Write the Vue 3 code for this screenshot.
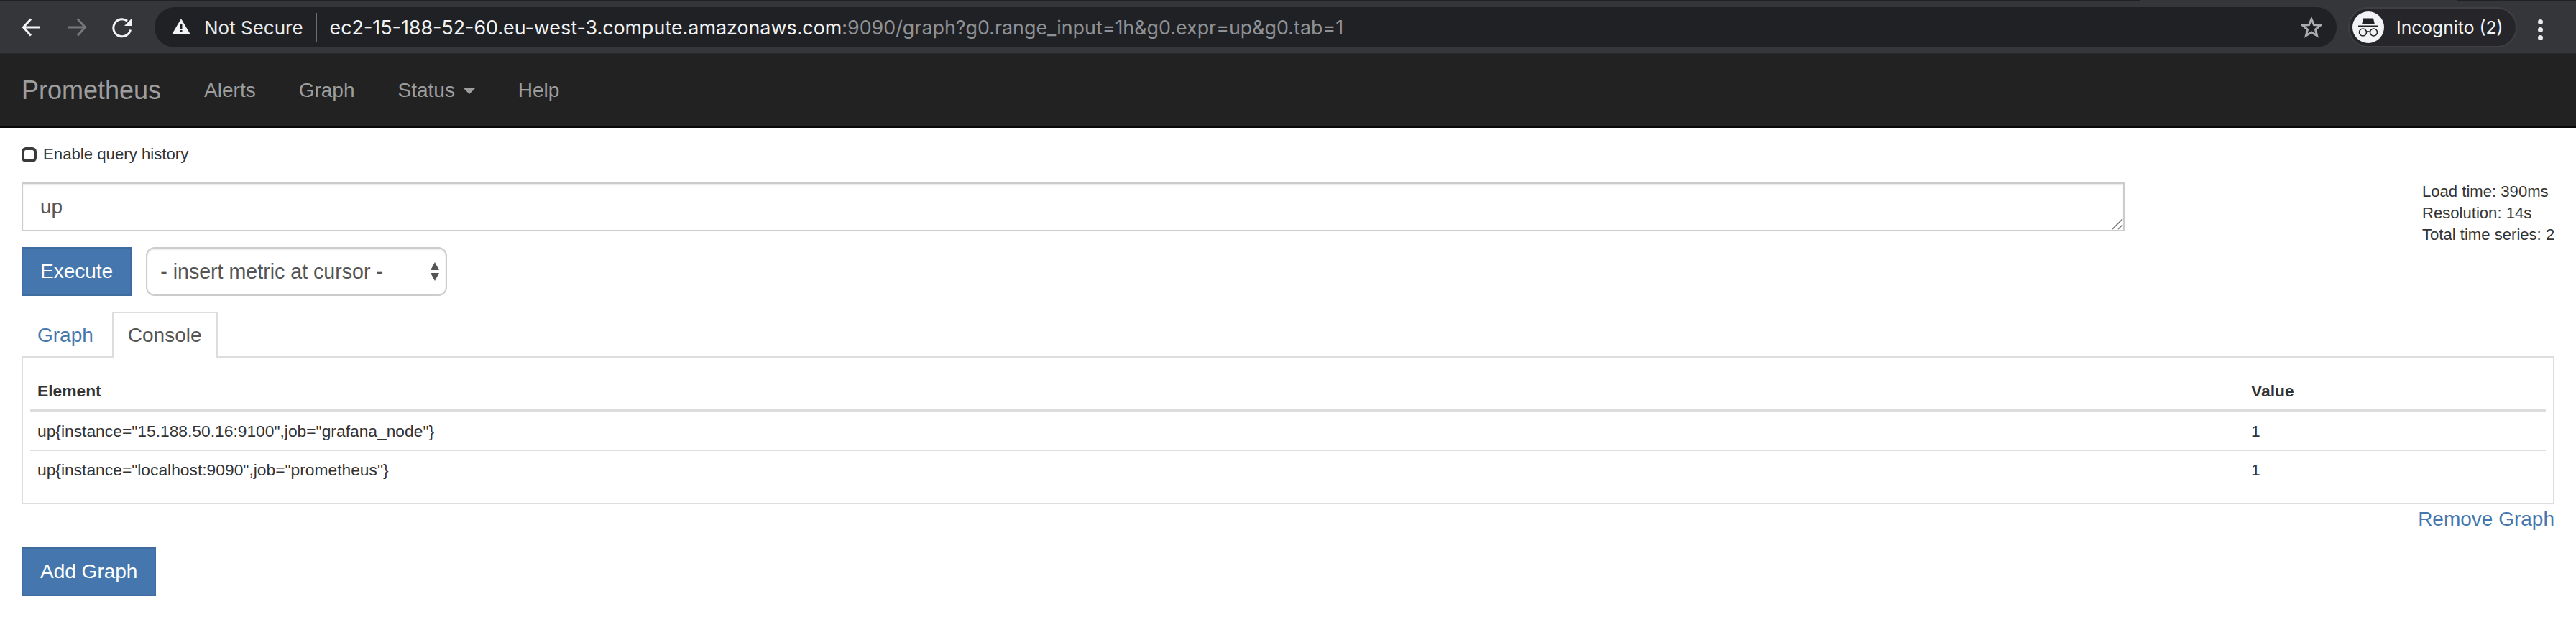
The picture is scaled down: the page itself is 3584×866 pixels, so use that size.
<script setup>
const rows = [
  { el: 'up{instance="15.188.50.16:9100",job="grafana_node"}', v: '1' },
  { el: 'up{instance="localhost:9090",job="prometheus"}', v: '1' }
]
</script>

<template>
  <div class="page">
    <div class="strip"><span class="s1"></span><span class="s2"></span><span class="s3"></span></div>
    <header class="chrome">
      <svg class="nav-ic first" width="28" height="28" viewBox="0 0 28 28"><path d="M26 14H3M13 2.5 2.5 14 13 25.5" fill="none" stroke="#f1f3f4" stroke-width="3"/></svg>
      <svg class="nav-ic" width="28" height="28" viewBox="0 0 28 28"><path d="M2 14h23M15 2.5 25.5 14 15 25.5" fill="none" stroke="#75777a" stroke-width="3"/></svg>
      <svg class="nav-ic" width="30" height="30" viewBox="0 0 30 30"><path d="M25.5 17.5A12 12 0 1 1 21 5.2" fill="none" stroke="#f1f3f4" stroke-width="3"/><path d="M17 12 27.5 12 27.5 1.5Z" fill="#f1f3f4"/></svg>
      <div class="omnibox">
        <svg class="warn" width="26" height="24" viewBox="0 0 26 24"><path d="M13 0 26 22H0Z" fill="#f1f3f4"/><rect x="11.5" y="8" width="3" height="6" fill="#202124"/><rect x="11.5" y="16" width="3" height="3" fill="#202124"/></svg>
        <span class="secure">Not Secure</span>
        <span class="sep"></span>
        <span class="url"><span class="host">ec2-15-188-52-60.eu-west-3.compute.amazonaws.com</span><span class="rest">:9090/graph?g0.range_input=1h&amp;g0.expr=up&amp;g0.tab=1</span></span>
        <svg class="star" width="30" height="30" viewBox="0 0 30 30"><path d="M15 3.5 18.4 11.6 27.2 12.3 20.5 18 22.6 26.6 15 22 7.4 26.6 9.5 18 2.8 12.3 11.6 11.6Z" fill="none" stroke="#a9abad" stroke-width="3"/></svg>
      </div>
      <div class="profile">
        <svg class="avatar" width="44" height="44" viewBox="0 0 44 44">
          <circle cx="22" cy="22" r="22" fill="#f1f3f4"/>
          <path d="M15 9.5 29 9.5 31 18H13Z" fill="#202124"/>
          <rect x="8" y="19.5" width="28" height="2" fill="#202124"/>
          <circle cx="14.5" cy="29" r="5" fill="none" stroke="#202124" stroke-width="1.6"/>
          <circle cx="29.5" cy="29" r="5" fill="none" stroke="#202124" stroke-width="1.6"/>
          <path d="M19.5 28h5" stroke="#202124" stroke-width="1.6"/>
        </svg>
        <span class="profile-name">Incognito (2)</span>
      </div>
      <div class="dots"><i></i><i></i><i></i></div>
    </header>

    <nav class="navbar">
      <a class="brand">Prometheus</a>
      <a class="nav-link">Alerts</a>
      <a class="nav-link">Graph</a>
      <a class="nav-link">Status <b class="caret"></b></a>
      <a class="nav-link">Help</a>
    </nav>

    <main class="content">
      <label class="history"><span class="check"></span>Enable query history</label>

      <div class="query-row">
        <div class="query-left">
          <div class="textarea">up
            <svg class="grip" width="16" height="16" viewBox="0 0 16 16"><path d="M1 15 15 1M9 15 15 9" stroke="#777" stroke-width="1.6"/></svg>
          </div>
          <div class="actions">
            <button class="btn">Execute</button>
            <div class="select">
              <span>- insert metric at cursor -</span>
              <svg width="12" height="26" viewBox="0 0 12 26"><path d="M6 0 12 11H0ZM6 26 0 15H12Z" fill="#555"/></svg>
            </div>
          </div>
        </div>
        <div class="stats">
          <div>Load time: 390ms</div>
          <div>Resolution: 14s</div>
          <div>Total time series: 2</div>
        </div>
      </div>

      <div class="tabs">
        <a class="tab">Graph</a>
        <a class="tab active">Console</a>
      </div>
      <section class="panel">
        <table>
          <thead><tr><th>Element</th><th class="val">Value</th></tr></thead>
          <tbody>
            <tr v-for="r in rows" :key="r.el"><td>{{ r.el }}</td><td class="val">{{ r.v }}</td></tr>
          </tbody>
        </table>
      </section>
      <div class="remove"><a>Remove Graph</a></div>
      <button class="btn add">Add Graph</button>
    </main>
  </div>
</template>

<style>
html, body { margin: 0; background: #fff; }
</style>

<style scoped>
.page { width: 3584px; height: 866px; overflow: hidden; font-family: "Liberation Sans", Arial, sans-serif; color: #333; font-size: 28px; }
.strip { height: 2px; display: flex; background: #35363a; }
.s1 { width: 2978px; background: #202124; }
.s2 { width: 441px; }
.s3 { flex: 1; background: #202124; }
.chrome { height: 73px; box-sizing: border-box; background: #35363a; display: flex; align-items: flex-start; padding-top: 8px; border-bottom: 1px solid #2a2a2c; }
.nav-ic { flex: none; margin-top: 14px; margin-right: 35px; }
.nav-ic.first { margin-left: 30px; }
.omnibox { flex: none; margin-left: -6px; width: 3036px; height: 56px; border-radius: 28px; background: #202124; display: flex; align-items: center; box-sizing: border-box; padding-left: 24px; position: relative; font-family: Inter, sans-serif; font-size: 26px; }
.warn { flex: none; }
.secure { margin-left: 19px; color: #e8eaed; white-space: nowrap; }
.sep { width: 1px; height: 40px; background: #6c6e71; margin: 0 18px; }
.url { white-space: nowrap; font-size: 26.85px; }
.host { color: #f1f3f4; }
.rest { color: #8f9296; }
.star { position: absolute; right: 20px; top: 13px; }
.profile { flex: none; margin-left: 16px; width: 235px; height: 56px; box-sizing: border-box; border: 2px solid #3f4044; border-radius: 28px; background: #26262a; display: flex; align-items: center; padding-left: 4px; font-family: Inter, sans-serif; font-size: 24.7px; color: #f1f3f4; }
.profile-name { margin-left: 17px; white-space: nowrap; }
.dots { flex: none; margin-left: 29px; margin-top: 17px; display: flex; flex-direction: column; gap: 4px; }
.dots i { display: block; width: 7px; height: 7px; border-radius: 50%; background: #e8eaed; }

.navbar { height: 101px; background: #222; border-bottom: 2px solid #080808; display: flex; align-items: center; padding-left: 30px; color: #9d9d9d; }
.brand { font-size: 36px; margin-right: 30px; }
.nav-link { padding: 0 30px; line-height: 40px; }
.caret { display: inline-block; width: 0; height: 0; margin-left: 4px; vertical-align: middle; border-top: 8px solid #9d9d9d; border-left: 8px solid transparent; border-right: 8px solid transparent; }

.content { padding: 0 30px; }
.history { display: flex; align-items: center; height: 34px; margin-top: 20px; font-size: 22.2px; }
.check { width: 21px; height: 21px; box-sizing: border-box; border: 4px solid #3a3a3a; border-radius: 6px; margin-right: 9px; }
.query-row { display: flex; margin-top: 22px; }
.query-left { width: 2926px; flex: none; }
.textarea { height: 68px; box-sizing: border-box; border: 2px solid #ccc; box-shadow: inset 0 2px 2px rgba(0,0,0,.075); padding: 12px 24px; font-size: 28px; line-height: 40px; color: #555; position: relative; }
.grip { position: absolute; right: 0; bottom: 0; }
.actions { display: flex; gap: 20px; margin-top: 22px; }
.btn { font: inherit; font-size: 28px; color: #fff; background: #4577ae; border: 2px solid #3e6c9f; height: 68px; padding: 0 24px; border-radius: 0; }
.select { width: 419px; height: 68px; box-sizing: border-box; border: 2px solid #ccc; border-radius: 12px; display: flex; align-items: center; justify-content: space-between; padding: 0 9px 0 18px; color: #555; font-size: 28.6px; box-shadow: inset 0 2px 2px rgba(0,0,0,.075); }
.stats { flex: 1; font-size: 22.1px; line-height: 30px; padding-left: 414px; margin-top: -2px; white-space: nowrap; }
.tabs { display: flex; margin-top: 22px; height: 64px; position: relative; z-index: 1; }
.tab { box-sizing: border-box; height: 64px; padding: 0 20px; margin-right: 4px; line-height: 62px; color: #4577ae; border: 2px solid transparent; border-bottom: 0; }
.tab.active { color: #555; background: #fff; border-color: #ddd; }
.panel { margin-top: -2px; height: 206px; box-sizing: border-box; border: 2px solid #ddd; padding: 20px 10px; }
table { width: 100%; border-collapse: collapse; font-size: 22.8px; line-height: 32px; color: #333; }
th { text-align: left; padding: 10px; border-bottom: 4px solid #ddd; }
td { padding: 10px; border-top: 2px solid #ddd; }
tbody tr:first-child td { border-top: 0; }
.val { width: 400px; }
.remove { text-align: right; height: 44px; margin-top: 1px; color: #4577ae; line-height: 40px; }
.add { display: block; margin-top: 15px; }
</style>
